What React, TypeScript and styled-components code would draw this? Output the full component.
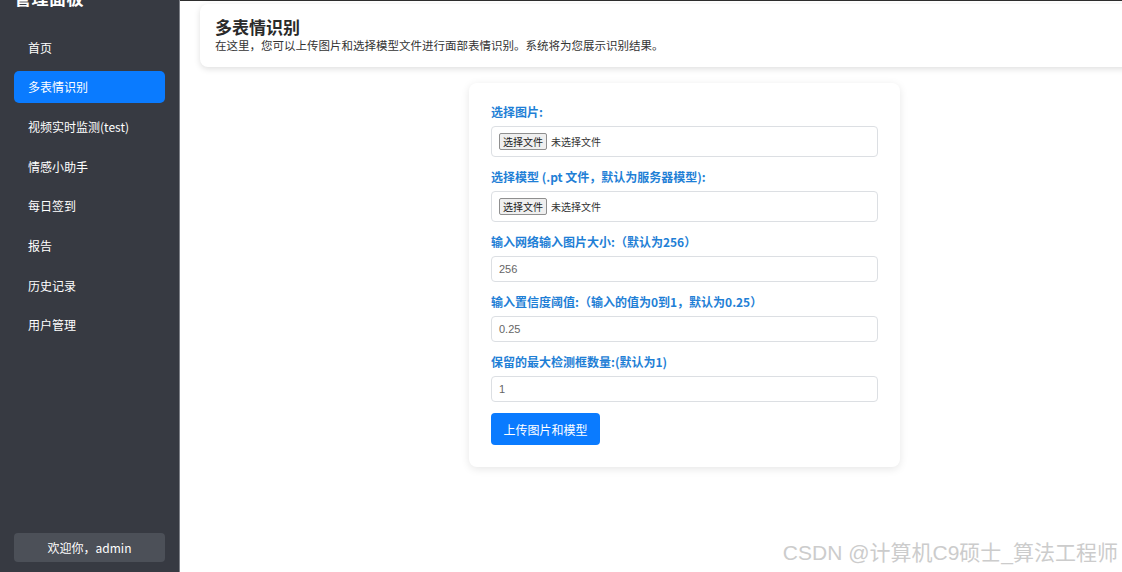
import React from "react";
import styled, { createGlobalStyle } from "styled-components";

const Global = createGlobalStyle`
  html, body { margin: 0; padding: 0; background: #fff; overflow: hidden; }
  body { font-family: "Noto Sans CJK SC", "Noto Sans", "Liberation Sans", sans-serif; }
  * { box-sizing: border-box; }
`;

const Shell = styled.div`
  display: grid;
  grid-template-columns: 180px 1009px;
  height: 572px;
  width: 1189px;
`;

const Sidebar = styled.aside`
  background: #373a42;
  border-right: 1px solid #7d8087;
  display: flex;
  flex-direction: column;
  padding: 0 14px 10px 14px;
  height: 572px;
`;

const Brand = styled.div`
  color: #fff;
  font-weight: 700;
  font-size: 17px;
  line-height: 22px;
  margin-top: -13px;
  margin-bottom: 22px;
  letter-spacing: 0.5px;
`;

const NavList = styled.nav`
  display: flex;
  flex-direction: column;
  gap: 7.7px;
`;

const NavItem = styled.div<{ $active?: boolean }>`
  height: 32px;
  display: flex;
  align-items: center;
  padding-left: 14px;
  border-radius: 5px;
  font-size: 12px;
  color: #fff;
  background: ${(p) => (p.$active ? "#0a7bff" : "transparent")};
`;

const Spacer = styled.div`
  flex: 1;
`;

const Welcome = styled.div`
  height: 29px;
  border-radius: 4px;
  background: #4c5058;
  color: #fff;
  font-size: 12px;
  display: flex;
  align-items: center;
  justify-content: center;
`;

const Main = styled.main`
  border-top: 1px solid #2e2e2e;
  display: flex;
  flex-direction: column;
  align-items: center;
  padding: 3px 20px 0 20px;
`;

const HeaderCard = styled.section`
  align-self: stretch;
  background: #fff;
  border-radius: 8px;
  box-shadow: 0 2px 6px rgba(0, 0, 0, 0.13);
  padding: 13px 15px 10px 15px;
  height: 63px;
`;

const Title = styled.h1`
  margin: 0;
  font-size: 17px;
  line-height: 20px;
  font-weight: 700;
  color: #2a2a2a;
`;

const Subtitle = styled.p`
  margin: 0;
  font-size: 11.5px;
  line-height: 16px;
  color: #333;
`;

const FormCard = styled.section`
  margin-top: 16px;
  width: 431px;
  background: #fff;
  border-radius: 8px;
  box-shadow: 0 2px 8px rgba(0, 0, 0, 0.1);
  padding: 21px 22px 22px 22px;
  display: flex;
  flex-direction: column;
`;

const Label = styled.label`
  font-size: 12px;
  line-height: 16px;
  font-weight: 700;
  color: #1f7fd6;
  margin-bottom: 6px;
`;

const Field = styled.div<{ $h: number }>`
  height: ${(p) => p.$h}px;
  border: 1px solid #dcdfe3;
  border-radius: 4px;
  display: flex;
  align-items: center;
  padding: 0 7px;
  margin-bottom: 12px;
  font-family: "Liberation Sans", "Noto Sans CJK SC", sans-serif;
  font-size: 11px;
  color: #666;
`;

const FileButton = styled.span`
  height: 17px;
  padding: 0 3px;
  display: inline-flex;
  align-items: center;
  background: #efefef;
  border: 1px solid #8f8f8f;
  border-radius: 2px;
  font-family: "Noto Sans CJK SC", sans-serif;
  font-size: 10px;
  color: #222;
  margin-right: 4px;
`;

const FileText = styled.span`
  font-family: "Noto Sans CJK SC", sans-serif;
  font-size: 10px;
  color: #333;
`;

const Submit = styled.button`
  align-self: flex-start;
  margin-top: -1px;
  height: 32px;
  width: 109px;
  border: none;
  border-radius: 4px;
  background: #0a7bff;
  color: #fff;
  font-family: inherit;
  font-size: 12px;
`;

const Watermark = styled.div`
  position: absolute;
  right: 4px;
  bottom: 6px;
  font-size: 21px;
  font-weight: 400;
  color: #cccccc;
  font-family: "Liberation Sans", "Noto Sans CJK SC", sans-serif;
`;

const navItems = ["首页", "多表情识别", "视频实时监测(test)", "情感小助手", "每日签到", "报告", "历史记录", "用户管理"];

export default function App() {
  return (
    <>
      <Global />
      <Shell>
        <Sidebar>
          <Brand>管理面板</Brand>
          <NavList>
            {navItems.map((t) => (
              <NavItem key={t} $active={t === "多表情识别"}>
                {t}
              </NavItem>
            ))}
          </NavList>
          <Spacer />
          <Welcome>欢迎你，admin</Welcome>
        </Sidebar>
        <Main>
          <HeaderCard>
            <Title>多表情识别</Title>
            <Subtitle>在这里，您可以上传图片和选择模型文件进行面部表情识别。系统将为您展示识别结果。</Subtitle>
          </HeaderCard>
          <FormCard>
            <Label>选择图片:</Label>
            <Field $h={31}>
              <FileButton>选择文件</FileButton>
              <FileText>未选择文件</FileText>
            </Field>
            <Label>选择模型 (.pt 文件，默认为服务器模型):</Label>
            <Field $h={31}>
              <FileButton>选择文件</FileButton>
              <FileText>未选择文件</FileText>
            </Field>
            <Label>输入网络输入图片大小:（默认为256）</Label>
            <Field $h={26}>256</Field>
            <Label>输入置信度阈值:（输入的值为0到1，默认为0.25）</Label>
            <Field $h={26}>0.25</Field>
            <Label>保留的最大检测框数量:(默认为1)</Label>
            <Field $h={26}>1</Field>
            <Submit>上传图片和模型</Submit>
          </FormCard>
        </Main>
      </Shell>
      <Watermark>CSDN @计算机C9硕士_算法工程师</Watermark>
    </>
  );
}
